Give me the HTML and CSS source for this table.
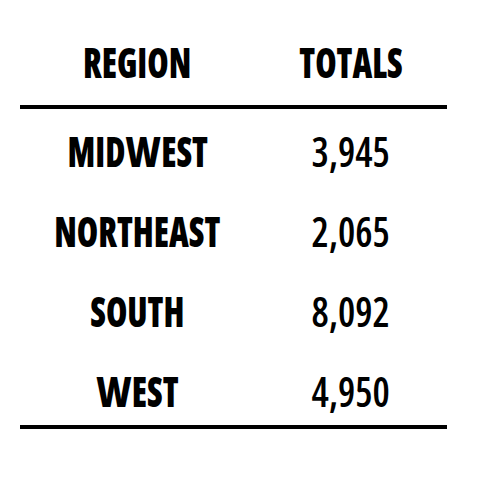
FILE: index.html
```html
<!DOCTYPE html>
<html lang="en">
<head>
<meta charset="utf-8">
<title>Region Totals</title>
<link rel="stylesheet" href="styles.css">
</head>
<body>
<div class="table">
  <div class="head">
    <div class="cell"><span class="label">REGION</span></div>
    <div class="cell"><span class="label">TOTALS</span></div>
  </div>
  <div class="body">
    <div class="row">
      <div class="cell"><span class="label">MID<span class="w">W</span>EST</span></div>
      <div class="cell"><span class="num">3,945</span></div>
    </div>
    <div class="row">
      <div class="cell"><span class="label">NORTHEAST</span></div>
      <div class="cell"><span class="num">2,065</span></div>
    </div>
    <div class="row">
      <div class="cell"><span class="label">SOUTH</span></div>
      <div class="cell"><span class="num">8,092</span></div>
    </div>
    <div class="row">
      <div class="cell"><span class="label"><span class="w">W</span>EST</span></div>
      <div class="cell"><span class="num">4,950</span></div>
    </div>
  </div>
</div>
</body>
</html>
```
FILE: styles.css
```css
html, body { margin: 0; background: #fff; }
.table {
  margin-left: 20px;
  width: 427px;
  font-family: "Open Sans", "Liberation Sans", sans-serif;
  font-stretch: 75%;
  font-size: 42px;
  line-height: 42px;
  color: #000;
}
.head, .row {
  display: grid;
  grid-template-columns: 1fr 1fr;
}
.head {
  box-sizing: border-box;
  height: 109px;
  padding-top: 41px;
  border-bottom: 4px solid #000;
}
.body {
  display: flex;
  flex-direction: column;
  gap: 38px;
  padding: 21px 0 13px;
  border-bottom: 4px solid #000;
}
.cell {
  display: flex;
  justify-content: center;
  padding-left: 21px;
  min-width: 0;
  white-space: nowrap;
}
.label, .num {
  display: inline-block;
  flex: none;
  transform-origin: center;
}
.label {
  font-weight: 800;
  transform: scaleX(0.82);
}
.w {
  font-stretch: 100%;
}
.num {
  font-weight: 600;
  font-variant-numeric: tabular-nums;
  transform: scaleX(0.92);
}
```
